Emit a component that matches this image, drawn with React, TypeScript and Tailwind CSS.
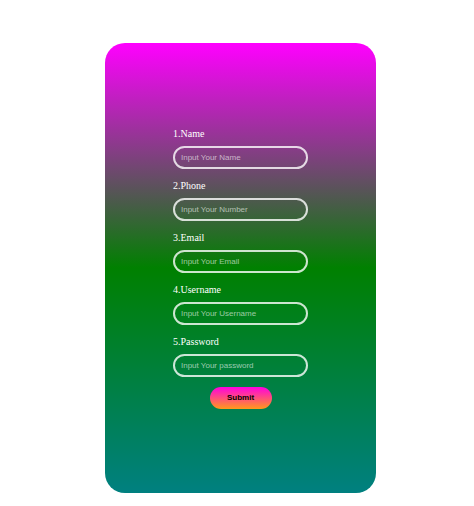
import React from "react";

const fields = [
  { label: "1.Name", placeholder: "Input Your Name", type: "text" },
  { label: "2.Phone", placeholder: "Input Your Number", type: "text" },
  { label: "3.Email", placeholder: "Input Your Email", type: "email" },
  { label: "4.Username", placeholder: "Input Your Username", type: "text" },
  { label: "5.Password", placeholder: "Input Your password", type: "password" },
];

export default function App() {
  return (
    <div className="min-h-[506px] w-full bg-white pt-[43px]">
      <div className="ml-[105px] flex h-[450px] w-[271px] flex-col items-center rounded-[20px] bg-[linear-gradient(#ff00ff,#008000,#008080)] pt-[84px]">
        <form className="flex w-[135px] flex-col" onSubmit={(e) => e.preventDefault()}>
          {fields.map((f) => (
            <div key={f.label} className="mb-[10px] flex flex-col">
              <label className="mb-[5px] font-['Liberation_Serif',serif] text-[10px] leading-[14px] text-white">
                {f.label}
              </label>
              <input
                type={f.type}
                placeholder={f.placeholder}
                className="h-[23px] w-full rounded-full border-2 border-white/80 bg-transparent px-[6px] font-['Liberation_Sans',Arial,sans-serif] text-[8px] text-white outline-none placeholder:text-white/60"
              />
            </div>
          ))}
          <button
            type="submit"
            className="mx-auto h-[22px] w-[62px] rounded-full bg-[linear-gradient(#ff00e0,#ff9a1a)] font-['Liberation_Sans',Arial,sans-serif] text-[8px] font-bold text-black"
          >
            Submit
          </button>
        </form>
      </div>
    </div>
  );
}
